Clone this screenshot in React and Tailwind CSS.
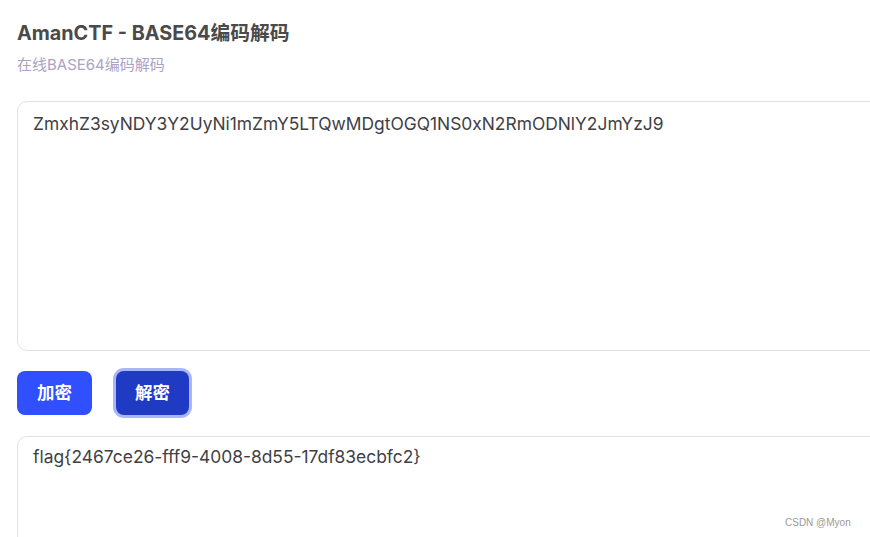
import React, { useState } from "react";

const App = () => {
  const [input, setInput] = useState(
    "ZmxhZ3syNDY3Y2UyNi1mZmY5LTQwMDgtOGQ1NS0xN2RmODNlY2JmYzJ9"
  );
  const [output, setOutput] = useState(
    "flag{2467ce26-fff9-4008-8d55-17df83ecbfc2}"
  );

  return (
    <div
      className="relative w-[870px] h-[537px] overflow-hidden bg-white"
      style={{ fontFamily: 'Inter, "Noto Sans CJK SC", sans-serif' }}
    >
      <div className="pl-[17px] pt-[19px] w-[1000px]">
        {/* Header */}
        <h1 className="text-[19.8px] leading-[28px] font-bold text-[#4a4a4a]">
          AmanCTF - BASE64编码解码
        </h1>
        <p className="mt-[7px] text-[15px] leading-[22px] text-[#a9a3c4]">
          在线BASE64编码解码
        </p>

        {/* Input */}
        <textarea
          className="mt-[25px] block w-[900px] h-[250px] resize-none rounded-[10px] border border-[#e2e2e2] px-[15px] py-[9px] text-[17.4px] leading-[26px] text-[#3f3f46] outline-none"
          value={input}
          onChange={(e) => setInput(e.target.value)}
        />

        {/* Buttons */}
        <div className="mt-[20px] flex items-center gap-[24px]">
          <button className="w-[75px] h-[44px] rounded-[8px] bg-[#304ffe] text-white text-[17.5px] font-bold">
            加密
          </button>
          <button className="w-[73px] h-[44px] rounded-[8px] bg-[#1f3bc4] text-white text-[17.5px] font-bold ring-[3px] ring-[#a9b6fb]">
            解密
          </button>
        </div>

        {/* Output */}
        <textarea
          className="mt-[21px] block w-[900px] h-[250px] resize-none rounded-[10px] border border-[#e2e2e2] px-[15px] py-[7px] text-[17.4px] leading-[26px] text-[#3f3f46] outline-none"
          value={output}
          onChange={(e) => setOutput(e.target.value)}
        />
      </div>

      {/* watermark */}
      <div
        className="absolute left-[785px] top-[515px] text-[10px] text-[#9a9a9a]"
        style={{ fontFamily: '"Liberation Sans", sans-serif' }}
      >
        CSDN @Myon⁠
      </div>
    </div>
  );
};

export default App;
